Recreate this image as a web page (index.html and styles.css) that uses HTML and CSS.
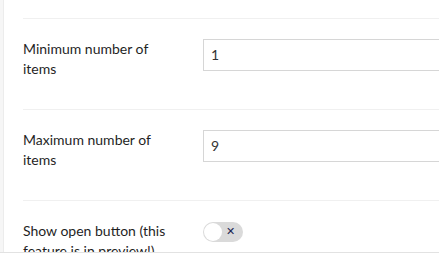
FILE: index.html
```html
<!DOCTYPE html>
<html>
<head>
<meta charset="utf-8">
<link rel="stylesheet" href="styles.css">
</head>
<body>
<div class="page">
  <div class="strip"></div>
  <div class="main">
    <div class="top-gap"></div>
    <div class="row">
      <div class="label">Minimum number of items</div>
      <div class="control"><div class="input">1</div></div>
    </div>
    <div class="row">
      <div class="label">Maximum number of items</div>
      <div class="control"><div class="input">9</div></div>
    </div>
    <div class="row">
      <div class="label">Show open button (this feature is in preview!)</div>
      <div class="control">
        <div class="toggle"><span class="knob"></span><span class="x">&#x2715;</span></div>
      </div>
    </div>
  </div>
</div>
<div class="footer"></div>
</body>
</html>
```
FILE: styles.css
```css
html, body {
  margin: 0;
  padding: 0;
  background: #fff;
  font-family: Lato, "Noto Sans", sans-serif;
  color: #1f1f1f;
  overflow: hidden;
  height: 262px;
}
.page {
  display: flex;
  height: 262px;
  overflow: hidden;
}
.strip {
  width: 3px;
  flex: none;
  background: #f6f6f6;
  border-right: 1px solid #ececec;
}
.main {
  flex: 1;
  padding-left: 19px;
  min-width: 0;
  overflow: hidden;
}
.top-gap {
  height: 18px;
}
.row {
  display: grid;
  grid-template-columns: 150px 1fr;
  column-gap: 30px;
  border-top: 1px solid #f0f0f0;
  padding: 20px 0 38px;
  height: 32px;
}
.label {
  font-size: 14px;
  line-height: 20px;
}
.control {
  min-width: 0;
}
.input {
  box-sizing: border-box;
  height: 32px;
  width: 300px;
  border: 1px solid #d6d6d6;
  padding: 0 7px;
  font-size: 14px;
  line-height: 30px;
  color: #333;
}
.toggle {
  position: relative;
  width: 40px;
  height: 20px;
  margin-top: 1px;
  border-radius: 10px;
  background: #dadada;
}
.knob {
  position: absolute;
  left: 1px;
  top: 1px;
  width: 18px;
  height: 18px;
  border-radius: 50%;
  background: #fff;
}
.x {
  position: absolute;
  left: 23px;
  top: 3px;
  font-size: 11px;
  line-height: 14px;
  font-weight: bold;
  color: #1c2753;
  font-family: "DejaVu Sans", sans-serif;
}
.footer {
  position: fixed;
  left: 0;
  right: 0;
  bottom: 0;
  height: 9px;
  background: #fff;
  border-top: 1px solid #e2e2e2;
}
```
